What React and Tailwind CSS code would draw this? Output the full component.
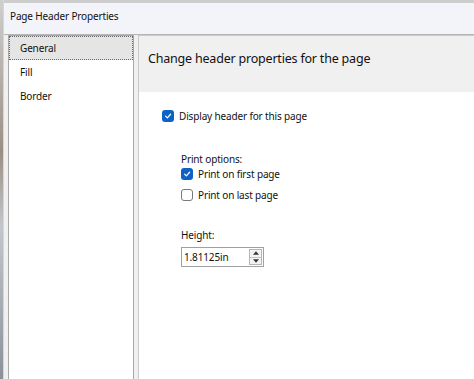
const font = { fontFamily: '"Noto Sans", "Open Sans", sans-serif' };

const label = "text-[10px] leading-[14px] tracking-[-0.15px] text-[#111]";

function Check({ checked }) {
  return checked ? (
    <span className="flex h-[12px] w-[12px] items-center justify-center rounded-[3px] bg-[#0f62c5]">
      <svg width="8" height="8" viewBox="0 0 10 10">
        <path d="M2 5.2 L4.2 7.4 L8.2 2.8" fill="none" stroke="#fff" strokeWidth="1.5" strokeLinecap="round" strokeLinejoin="round" />
      </svg>
    </span>
  ) : (
    <span className="h-[12px] w-[12px] rounded-[3px] border border-[#7a7a7a] bg-white" />
  );
}

function CheckRow({ checked, text }) {
  return (
    <div className="flex h-[14px] items-center gap-[5px]">
      <Check checked={checked} />
      <span className={label}>{text}</span>
    </div>
  );
}

export default function App() {
  return (
    <div className="flex h-[379px] w-[474px] overflow-hidden bg-[#cdcdcd]" style={font}>
      <div className="w-[3px] bg-[linear-gradient(#cfcfcf,#9a8f84_40%,#c3c7cc_60%,#8c9099)]" />
      <div className="flex flex-1 flex-col border-l border-[#d6d6d6] pt-[3px]">
        <div className={`h-[31px] bg-[#f3f3fa] pl-[6px] pt-[6px] ${label}`}>
          Page Header Properties
        </div>
        <div className="flex flex-1 border-t border-[#b5b5b5] bg-[#f0f0f0]">
          <div className={`ml-[4px] w-[126px] border border-b-0 border-[#a8a8a8] bg-white ${label}`}>
            <div className="flex h-[24px] items-center border border-dotted border-[#6a6a6a] bg-[#e5e5e5] pl-[10px]">
              General
            </div>
            <div className="flex h-[24px] items-center pl-[11px]">Fill</div>
            <div className="flex h-[24px] items-center pl-[11px]">Border</div>
          </div>
          <div className="ml-[4px] flex flex-1 flex-col border-l border-t border-[#c9c9c9]">
            <div className="h-[56px] bg-[#f0f0f0] pl-[9px] pt-[15px] text-[12.5px] leading-[16px] tracking-[-0.2px] text-[#111]">
              Change header properties for the page
            </div>
            <div className="flex-1 bg-white pl-[23px] pt-[17px]">
              <CheckRow checked text="Display header for this page" />
              <div className="ml-[19px] mt-[29px] flex flex-col">
                <span className={label}>Print options:</span>
                <div className="mt-[1px] flex flex-col gap-[7px]">
                  <CheckRow checked text="Print on first page" />
                  <CheckRow text="Print on last page" />
                </div>
                <span className={`mt-[26px] ${label}`}>Height:</span>
                <div className="mt-[5px] flex h-[20px] w-[83px] items-center justify-between border border-[#a0a0a0] bg-white pl-[2px] pr-[1px]">
                  <span className={label}>1.81125in</span>
                  <div className="flex h-[16px] w-[13px] flex-col border border-[#b5b5b5] bg-[#f3f3f3]">
                    <div className="flex flex-1 items-center justify-center border-b border-[#c5c5c5]">
                      <svg width="6" height="4" viewBox="0 0 7 4"><path d="M0 4 L3.5 0 L7 4 Z" fill="#333" /></svg>
                    </div>
                    <div className="flex flex-1 items-center justify-center">
                      <svg width="6" height="4" viewBox="0 0 7 4"><path d="M0 0 L3.5 4 L7 0 Z" fill="#333" /></svg>
                    </div>
                  </div>
                </div>
              </div>
            </div>
          </div>
        </div>
      </div>
    </div>
  );
}
